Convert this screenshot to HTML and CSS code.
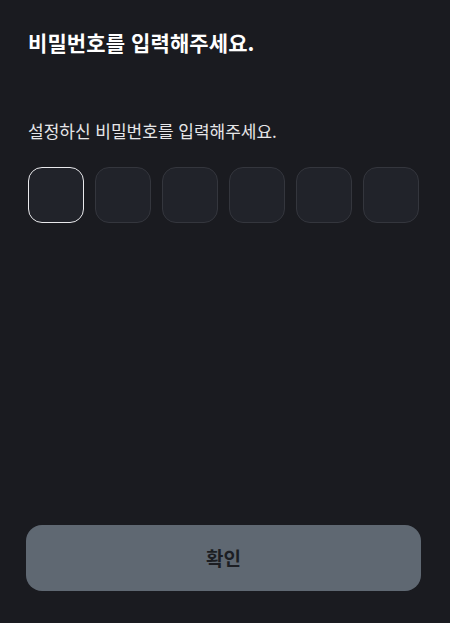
FILE: index.html
```html
<!DOCTYPE html>
<html lang="ko">
<head>
<meta charset="utf-8">
<link rel="stylesheet" href="styles.css">
</head>
<body>
<main class="screen">
  <h1 class="title">비밀번호를 입력해주세요.</h1>
  <p class="subtitle">설정하신 비밀번호를 입력해주세요.</p>
  <div class="pin">
    <div class="cell active"></div>
    <div class="cell"></div>
    <div class="cell"></div>
    <div class="cell"></div>
    <div class="cell"></div>
    <div class="cell"></div>
  </div>
  <div class="spacer"></div>
  <button class="confirm" type="button">확인</button>
</main>
</body>
</html>
```
FILE: styles.css
```css
html, body {
  margin: 0;
  padding: 0;
  background: #1a1b20;
}
body {
  font-family: "Noto Sans CJK KR", "Noto Sans", sans-serif;
}
.screen {
  height: 623px;
  box-sizing: border-box;
  display: flex;
  flex-direction: column;
  padding: 28px 29px 32px 26px;
}
.title {
  margin: 0 0 0 2px;
  font-size: 21px;
  line-height: 28px;
  font-weight: 700;
  color: #ffffff;
  letter-spacing: 0.1px;
}
.subtitle {
  margin: 64px 0 0 2px;
  font-size: 17px;
  line-height: 22px;
  font-weight: 400;
  color: #e6e6e8;
  letter-spacing: 0;
}
.pin {
  margin: 25px 0 0 2px;
  display: flex;
  gap: 11px;
}
.cell {
  width: 56px;
  height: 56px;
  box-sizing: border-box;
  border-radius: 14px;
  background: #21232a;
  border: 1px solid #34363d;
}
.cell.active {
  border: 1.5px solid #e9e9ec;
}
.spacer {
  flex: 1;
}
.confirm {
  height: 66px;
  border: none;
  border-radius: 16px;
  background: #5f6872;
  color: #1c1e23;
  font-family: "Noto Sans CJK KR", "Noto Sans", sans-serif;
  font-size: 19px;
  font-weight: 700;
  padding: 0 0 2px 0;
}
```
